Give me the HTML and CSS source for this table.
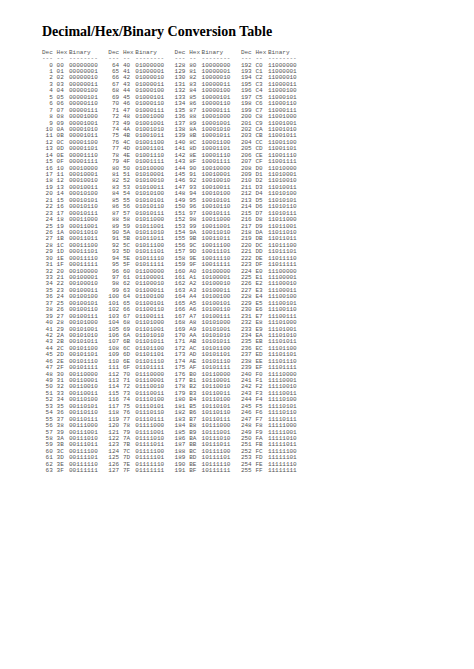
FILE: index.html
```html
<!DOCTYPE html>
<html>
<head>
<meta charset="utf-8">
<title>Decimal/Hex/Binary Conversion Table</title>
<link rel="stylesheet" href="styles.css">
</head>
<body>
<div class="page">
<h1 class="title">Decimal/Hex/Binary Conversion Table</h1>
<div class="table">
<div class="group">
<pre class="col dec">Dec
---
  0
  1
  2
  3
  4
  5
  6
  7
  8
  9
 10
 11
 12
 13
 14
 15
 16
 17
 18
 19
 20
 21
 22
 23
 24
 25
 26
 27
 28
 29
 30
 31
 32
 33
 34
 35
 36
 37
 38
 39
 40
 41
 42
 43
 44
 45
 46
 47
 48
 49
 50
 51
 52
 53
 54
 55
 56
 57
 58
 59
 60
 61
 62
 63</pre>
<pre class="col hex">Hex
--
00
01
02
03
04
05
06
07
08
09
0A
0B
0C
0D
0E
0F
10
11
12
13
14
15
16
17
18
19
1A
1B
1C
1D
1E
1F
20
21
22
23
24
25
26
27
28
29
2A
2B
2C
2D
2E
2F
30
31
32
33
34
35
36
37
38
39
3A
3B
3C
3D
3E
3F</pre>
<pre class="col bin">Binary
--------
00000000
00000001
00000010
00000011
00000100
00000101
00000110
00000111
00001000
00001001
00001010
00001011
00001100
00001101
00001110
00001111
00010000
00010001
00010010
00010011
00010100
00010101
00010110
00010111
00011000
00011001
00011010
00011011
00011100
00011101
00011110
00011111
00100000
00100001
00100010
00100011
00100100
00100101
00100110
00100111
00101000
00101001
00101010
00101011
00101100
00101101
00101110
00101111
00110000
00110001
00110010
00110011
00110100
00110101
00110110
00110111
00111000
00111001
00111010
00111011
00111100
00111101
00111110
00111111</pre>
</div>
<div class="group">
<pre class="col dec">Dec
---
 64
 65
 66
 67
 68
 69
 70
 71
 72
 73
 74
 75
 76
 77
 78
 79
 80
 81
 82
 83
 84
 85
 86
 87
 88
 89
 90
 91
 92
 93
 94
 95
 96
 97
 98
 99
100
101
102
103
104
105
106
107
108
109
110
111
112
113
114
115
116
117
118
119
120
121
122
123
124
125
126
127</pre>
<pre class="col hex">Hex
--
40
41
42
43
44
45
46
47
48
49
4A
4B
4C
4D
4E
4F
50
51
52
53
54
55
56
57
58
59
5A
5B
5C
5D
5E
5F
60
61
62
63
64
65
66
67
68
69
6A
6B
6C
6D
6E
6F
70
71
72
73
74
75
76
77
78
79
7A
7B
7C
7D
7E
7F</pre>
<pre class="col bin">Binary
--------
01000000
01000001
01000010
01000011
01000100
01000101
01000110
01000111
01001000
01001001
01001010
01001011
01001100
01001101
01001110
01001111
01010000
01010001
01010010
01010011
01010100
01010101
01010110
01010111
01011000
01011001
01011010
01011011
01011100
01011101
01011110
01011111
01100000
01100001
01100010
01100011
01100100
01100101
01100110
01100111
01101000
01101001
01101010
01101011
01101100
01101101
01101110
01101111
01110000
01110001
01110010
01110011
01110100
01110101
01110110
01110111
01111000
01111001
01111010
01111011
01111100
01111101
01111110
01111111</pre>
</div>
<div class="group">
<pre class="col dec">Dec
---
128
129
130
131
132
133
134
135
136
137
138
139
140
141
142
143
144
145
146
147
148
149
150
151
152
153
154
155
156
157
158
159
160
161
162
163
164
165
166
167
168
169
170
171
172
173
174
175
176
177
178
179
180
181
182
183
184
185
186
187
188
189
190
191</pre>
<pre class="col hex">Hex
--
80
81
82
83
84
85
86
87
88
89
8A
8B
8C
8D
8E
8F
90
91
92
93
94
95
96
97
98
99
9A
9B
9C
9D
9E
9F
A0
A1
A2
A3
A4
A5
A6
A7
A8
A9
AA
AB
AC
AD
AE
AF
B0
B1
B2
B3
B4
B5
B6
B7
B8
B9
BA
BB
BC
BD
BE
BF</pre>
<pre class="col bin">Binary
--------
10000000
10000001
10000010
10000011
10000100
10000101
10000110
10000111
10001000
10001001
10001010
10001011
10001100
10001101
10001110
10001111
10010000
10010001
10010010
10010011
10010100
10010101
10010110
10010111
10011000
10011001
10011010
10011011
10011100
10011101
10011110
10011111
10100000
10100001
10100010
10100011
10100100
10100101
10100110
10100111
10101000
10101001
10101010
10101011
10101100
10101101
10101110
10101111
10110000
10110001
10110010
10110011
10110100
10110101
10110110
10110111
10111000
10111001
10111010
10111011
10111100
10111101
10111110
10111111</pre>
</div>
<div class="group">
<pre class="col dec">Dec
---
192
193
194
195
196
197
198
199
200
201
202
203
204
205
206
207
208
209
210
211
212
213
214
215
216
217
218
219
220
221
222
223
224
225
226
227
228
229
230
231
232
233
234
235
236
237
238
239
240
241
242
243
244
245
246
247
248
249
250
251
252
253
254
255</pre>
<pre class="col hex">Hex
--
C0
C1
C2
C3
C4
C5
C6
C7
C8
C9
CA
CB
CC
CD
CE
CF
D0
D1
D2
D3
D4
D5
D6
D7
D8
D9
DA
DB
DC
DD
DE
DF
E0
E1
E2
E3
E4
E5
E6
E7
E8
E9
EA
EB
EC
ED
EE
EF
F0
F1
F2
F3
F4
F5
F6
F7
F8
F9
FA
FB
FC
FD
FE
FF</pre>
<pre class="col bin">Binary
--------
11000000
11000001
11000010
11000011
11000100
11000101
11000110
11000111
11001000
11001001
11001010
11001011
11001100
11001101
11001110
11001111
11010000
11010001
11010010
11010011
11010100
11010101
11010110
11010111
11011000
11011001
11011010
11011011
11011100
11011101
11011110
11011111
11100000
11100001
11100010
11100011
11100100
11100101
11100110
11100111
11101000
11101001
11101010
11101011
11101100
11101101
11101110
11101111
11110000
11110001
11110010
11110011
11110100
11110101
11110110
11110111
11111000
11111001
11111010
11111011
11111100
11111101
11111110
11111111</pre>
</div>
</div>
</div>
</body>
</html>
```

FILE: styles.css
```css
html, body {
  margin: 0;
  padding: 0;
  background: #ffffff;
}

.page {
  padding: 24px 0 0 42px;
}

.title {
  margin: 0 0 9.7px 0;
  font-family: "Liberation Serif", "Times New Roman", serif;
  font-weight: bold;
  font-size: 14px;
  line-height: 16px;
  color: #000000;
  white-space: nowrap;
}

.table {
  display: flex;
}

.group {
  display: flex;
  flex: 0 0 66.3px;
  width: 66.3px;
}

.col {
  margin: 0;
  font-family: "Liberation Mono", "Courier New", monospace;
  font-size: 6px;
  line-height: 6.43px;
  color: #555555;
  white-space: pre;
}

.dec {
  flex: 0 0 14.6px;
}

.hex {
  flex: 0 0 12.4px;
}

.bin {
  flex: 0 0 auto;
}
```
